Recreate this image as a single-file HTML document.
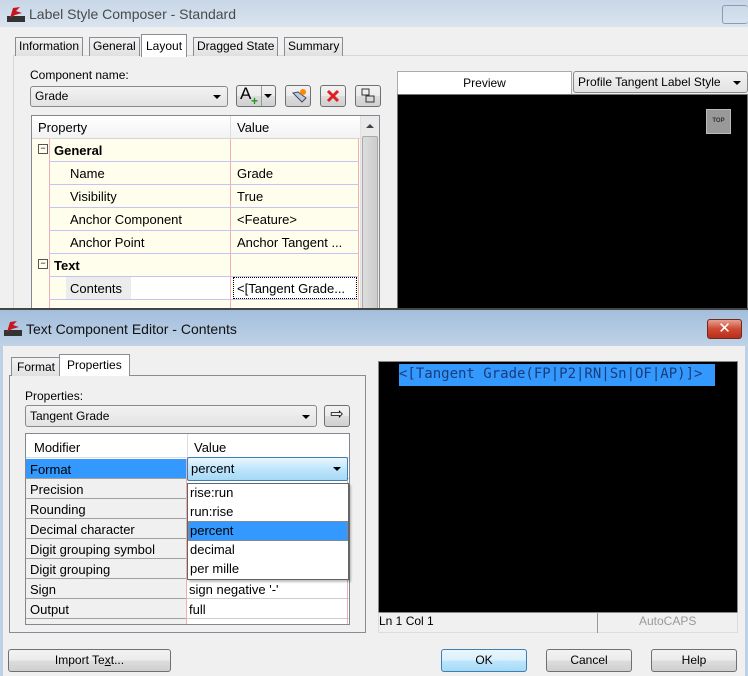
<!DOCTYPE html>
<html><head><style>
*{box-sizing:border-box;margin:0;padding:0}
body{width:748px;height:676px;overflow:hidden;background:#f0f0f0;font-family:"Liberation Sans","DejaVu Sans",sans-serif;font-size:12px;color:#000;position:relative}
.a{position:absolute}
.btn{position:absolute;border:1px solid #707070;border-radius:3px;background:linear-gradient(#f2f2f2,#ebebeb 50%,#dddddd 51%,#cfcfcf);text-align:center;font-size:12px}
.combo{position:absolute;border:1px solid #8a8a8a;border-radius:3px;background:linear-gradient(#f2f2f2,#e3e3e3);padding-left:4px;font-size:12px}
.tri{position:absolute;width:0;height:0;border-left:4px solid transparent;border-right:4px solid transparent;border-top:4px solid #000}
.tab{position:absolute;border:1px solid #898c95;border-bottom:none;background:linear-gradient(#f3f3f3,#e0e0e0);padding:0 3px;font-size:12px}
.row{position:absolute;left:0;right:0;height:23px;border-bottom:1px solid #c4c4f4}
.r2{position:absolute;left:0;right:0;height:20px;border-bottom:1px solid #a0a0a0;background:#f0f0f0}
</style></head><body>

<div class="a" style="left:0;top:0;width:748px;height:27px;background:linear-gradient(#c7d6e7,#d9e4ef)"></div>
<svg class="a" style="left:7px;top:6px" width="18" height="16"><rect x="0" y="10" width="18" height="6" fill="#333"/><path d="M3 12 L6 2 L13 1 L9 5 L15 7 L8 9 Z" fill="#c8141e"/></svg>
<div class="a" style="left:29px;top:6px;font-size:14px;color:#4a4a4a">Label Style Composer - Standard</div>
<div class="a" style="left:722px;top:5px;width:26px;height:19px;border:1px solid #8b9bb0;border-radius:3px;border-right:none"></div>

<div class="a" style="left:13px;top:55px;width:735px;height:256px;border-top:1px solid #d8d8d8;border-left:1px solid #d8d8d8;background:#fff"></div>
<div class="a" style="left:14px;top:56px;width:734px;height:254px;background:#f0f0f0"></div>
<div class="tab" style="left:15px;top:37px;height:19px;line-height:17px">Information</div>
<div class="tab" style="left:89px;top:37px;height:19px;line-height:17px">General</div>
<div class="tab" style="left:141px;top:34px;height:23px;line-height:22px;background:#fff;padding:0 4px">Layout</div>
<div class="tab" style="left:193px;top:37px;height:19px;line-height:17px">Dragged State</div>
<div class="tab" style="left:284px;top:37px;height:19px;line-height:17px">Summary</div>

<div class="a" style="left:30px;top:68px">Component name:</div>
<div class="combo" style="left:30px;top:86px;width:198px;height:21px;line-height:19px">Grade<div class="tri" style="right:6px;top:8px"></div></div>
<div class="btn" style="left:236px;top:85px;width:40px;height:22px"></div>
<div class="a" style="left:240px;top:84px;font-size:17px">A</div><div class="a" style="left:251px;top:94px;color:#1a9a1a;font-weight:bold;font-size:12px">+</div>
<div class="a" style="left:261px;top:86px;width:1px;height:20px;background:#999"></div><div class="tri" style="left:264px;top:94px"></div>
<div class="btn" style="left:285px;top:85px;width:26px;height:22px"><svg width="22" height="20"><path d="M6 7 L15 16 L19 12 L11 6 Z" fill="#bcd" stroke="#446" stroke-width="1"/><circle cx="16" cy="6" r="3" fill="#f80"/></svg></div>
<div class="btn" style="left:320px;top:85px;width:26px;height:22px"><svg width="22" height="20"><path d="M6 5 L16 15 M16 5 L6 15" stroke="#e02020" stroke-width="3"/></svg></div>
<div class="btn" style="left:355px;top:85px;width:26px;height:22px"><svg width="22" height="20"><rect x="5" y="3" width="7" height="6" fill="none" stroke="#333"/><rect x="9" y="10" width="8" height="6" fill="none" stroke="#333"/></svg></div>

<div class="a" style="left:31px;top:115px;width:349px;height:196px;border:1px solid #828790;background:#fffdeb;overflow:hidden">
 <div class="a" style="left:0;top:0;width:328px;height:23px;background:linear-gradient(#fff,#f2f2f2);border-bottom:1px solid #d5d5d5"></div>
 <div class="a" style="left:6px;top:4px;font-size:13px">Property</div>
 <div class="a" style="left:198px;top:0;width:1px;height:23px;background:#ddd"></div>
 <div class="a" style="left:205px;top:4px;font-size:13px">Value</div>
 <div class="a" style="left:17px;top:23px;width:1px;height:180px;background:#f0b0b0"></div>
 <div class="a" style="left:198px;top:23px;width:1px;height:180px;background:#f0b0b0"></div>
 <div class="a" style="left:326px;top:23px;width:1px;height:180px;background:#f0b0b0"></div>
 <div class="a" style="left:17px;top:23px;width:310px;height:160px">
  <div class="row" style="top:0"></div><div class="row" style="top:23px"></div><div class="row" style="top:46px"></div><div class="row" style="top:69px"></div><div class="row" style="top:92px"></div><div class="row" style="top:115px"></div><div class="row" style="top:138px"></div>
 </div>
 <div class="a" style="left:6px;top:28px;width:10px;height:10px;border:1px solid #555;font-size:9px;line-height:7px;text-align:center">−</div>
 <div class="a" style="left:22px;top:27px;font-weight:bold;font-size:13px">General</div>
 <div class="a" style="left:38px;top:50px;font-size:13px">Name</div><div class="a" style="left:205px;top:50px;font-size:13px">Grade</div>
 <div class="a" style="left:38px;top:73px;font-size:13px">Visibility</div><div class="a" style="left:205px;top:73px;font-size:13px">True</div>
 <div class="a" style="left:38px;top:96px;font-size:13px">Anchor Component</div><div class="a" style="left:205px;top:96px;font-size:13px">&lt;Feature&gt;</div>
 <div class="a" style="left:38px;top:119px;font-size:13px">Anchor Point</div><div class="a" style="left:205px;top:119px;font-size:13px">Anchor Tangent ...</div>
 <div class="a" style="left:6px;top:143px;width:10px;height:10px;border:1px solid #555;font-size:9px;line-height:7px;text-align:center">−</div>
 <div class="a" style="left:22px;top:142px;font-weight:bold;font-size:13px">Text</div>
 <div class="a" style="left:34px;top:161px;width:65px;height:22px;background:#ececec"></div>
 <div class="a" style="left:99px;top:161px;width:99px;height:22px;background:#fff"></div>
 <div class="a" style="left:38px;top:165px;font-size:13px">Contents</div>
 <div class="a" style="left:201px;top:161px;width:124px;height:22px;border:1px dotted #000;background:#fff;padding:3px 0 0 3px;font-size:13px">&lt;[Tangent Grade...</div>
 <div class="a" style="left:328px;top:0;width:19px;height:196px;background:#eaeaea;border-left:1px solid #e0e0e0"></div>
 <div class="tri" style="left:334px;top:8px;border-top:none;border-bottom:4px solid #444"></div>
 <div class="a" style="left:330px;top:20px;width:16px;height:180px;background:linear-gradient(90deg,#ddd,#ccc);border:1px solid #aaa;border-radius:2px"></div>
</div>

<div class="a" style="left:397px;top:71px;width:175px;height:23px;border:1px solid #aaa;border-bottom:none;background:#fff;text-align:center;line-height:22px">Preview</div>
<div class="combo" style="left:573px;top:71px;width:175px;height:22px;line-height:20px">Profile Tangent Label Style<div class="tri" style="right:6px;top:9px"></div></div>
<div class="a" style="left:397px;top:94px;width:351px;height:216px;background:#000;border:1px solid #777"></div>
<div class="a" style="left:706px;top:109px;width:25px;height:25px;background:#999;border:1px solid #bbb;font-size:6px;text-align:center;line-height:23px;color:#333;font-weight:bold">TOP</div>

<div class="a" style="left:0;top:308px;width:748px;height:2px;background:#444"></div>
<div class="a" style="left:0;top:310px;width:748px;height:36px;background:linear-gradient(#a3bedc,#bfd2e6)"></div>
<svg class="a" style="left:4px;top:320px" width="18" height="16"><rect x="0" y="10" width="18" height="6" fill="#333"/><path d="M3 12 L6 2 L13 1 L9 5 L15 7 L8 9 Z" fill="#c8141e"/></svg>
<div class="a" style="left:26px;top:321px;font-size:14px;color:#111">Text Component Editor - Contents</div>
<div class="a" style="left:707px;top:319px;width:35px;height:20px;border:1px solid #6b2a22;border-radius:3px;background:linear-gradient(#e8a090,#cf4a33 50%,#b82e1a);color:#fff;font-weight:bold;text-align:center;line-height:18px;font-size:15px">✕</div>
<div class="a" style="left:0;top:346px;width:3px;height:330px;background:#bcd0e6"></div>
<div class="a" style="left:745px;top:346px;width:3px;height:330px;background:#bcd0e6"></div>

<div class="a" style="left:9px;top:375px;width:357px;height:258px;border:1px solid #898c95;background:#f0f0f0"></div>
<div class="tab" style="left:11px;top:357px;height:19px;line-height:18px;padding:0 5px">Format</div>
<div class="tab" style="left:59px;top:354px;height:22px;line-height:20px;background:#fff;padding:0 7px">Properties</div>
<div class="a" style="left:25px;top:389px">Properties:</div>
<div class="combo" style="left:25px;top:405px;width:292px;height:22px;line-height:21px">Tangent Grade<div class="tri" style="right:6px;top:9px"></div></div>
<div class="btn" style="left:324px;top:405px;width:26px;height:22px;font-size:16px;line-height:18px">⇨</div>

<div class="a" style="left:25px;top:433px;width:325px;height:192px;border:1px solid #828790;background:#fff;overflow:hidden">
 <div class="a" style="left:0;top:0;width:323px;height:24px;background:#fff;border-bottom:1px solid #ddd"></div>
 <div class="a" style="left:8px;top:6px;font-size:13px">Modifier</div>
 <div class="a" style="left:161px;top:0;width:1px;height:24px;background:#ddd"></div>
 <div class="a" style="left:168px;top:6px;font-size:13px">Value</div>
 <div class="a" style="left:0;top:25px;width:160px;height:200px">
  <div class="r2" style="top:0;background:#3399ff"></div><div class="r2" style="top:20px"></div><div class="r2" style="top:40px"></div><div class="r2" style="top:60px"></div><div class="r2" style="top:80px"></div><div class="r2" style="top:100px"></div><div class="r2" style="top:120px"></div><div class="r2" style="top:140px"></div><div class="r2" style="top:160px"></div>
 </div>
 <div class="a" style="left:161px;top:25px;width:162px;height:200px;background:#fff">
  <div class="r2" style="top:0;background:#fff;border-color:#ccc"></div><div class="r2" style="top:120px;background:#fff;border-color:#ccc"></div><div class="r2" style="top:140px;background:#fff;border-color:#ccc"></div><div class="r2" style="top:160px;background:#fff;border-color:#ccc"></div>
 </div>
 <div class="a" style="left:160px;top:25px;width:1px;height:170px;background:#f0b0b0"></div>
 <div class="a" style="left:321px;top:25px;width:1px;height:170px;background:#f0b0b0"></div>
 <div class="a" style="left:4px;top:28px;font-size:13px">Format</div>
 <div class="a" style="left:4px;top:48px;font-size:13px">Precision</div>
 <div class="a" style="left:4px;top:68px;font-size:13px">Rounding</div>
 <div class="a" style="left:4px;top:88px;font-size:13px">Decimal character</div>
 <div class="a" style="left:4px;top:108px;font-size:13px">Digit grouping symbol</div>
 <div class="a" style="left:4px;top:128px;font-size:13px">Digit grouping</div>
 <div class="a" style="left:4px;top:148px;font-size:13px">Sign</div><div class="a" style="left:163px;top:148px;font-size:13px">sign negative '-'</div>
 <div class="a" style="left:4px;top:168px;font-size:13px">Output</div><div class="a" style="left:163px;top:168px;font-size:13px">full</div>
 <div class="a" style="left:161px;top:23px;width:161px;height:24px;border:1px solid #3c7fb1;border-radius:2px;background:linear-gradient(#eaf6fd,#bee6fd 50%,#a7d9f5);padding:3px 0 0 3px;font-size:13px">percent<div class="tri" style="right:6px;top:9px"></div></div>
</div>

<div class="a" style="left:187px;top:483px;width:162px;height:97px;border:1px solid #646464;background:#fff;box-shadow:2px 2px 2px rgba(0,0,0,.25);font-size:13px">
 <div class="a" style="left:2px;top:1px">rise:run</div>
 <div class="a" style="left:2px;top:20px">run:rise</div>
 <div class="a" style="left:0;top:37px;width:160px;height:20px;background:#3399ff;border:1px dotted #c08040"></div>
 <div class="a" style="left:2px;top:39px">percent</div>
 <div class="a" style="left:2px;top:58px">decimal</div>
 <div class="a" style="left:2px;top:77px">per mille</div>
</div>

<div class="a" style="left:378px;top:361px;width:360px;height:252px;background:#000;border:1px solid #888"></div>
<div class="a" style="left:399px;top:364px;width:316px;height:22px;background:#3399ff"></div>
<div class="a" style="left:399px;top:366px;width:316px;font-family:'DejaVu Sans Mono','Liberation Mono',monospace;font-size:14px;color:#1a3c7a;letter-spacing:0;white-space:nowrap;overflow:hidden">&lt;[Tangent Grade(FP|P2|RN|Sn|OF|AP)]&gt;</div>
<div class="a" style="left:378px;top:612px;width:360px;height:21px;border:1px solid #ddd;border-top:1px solid #888;background:#f0f0f0"></div>
<div class="a" style="left:597px;top:612px;width:1px;height:21px;background:#999"></div>
<div class="a" style="left:379px;top:614px">Ln 1 Col 1</div>
<div class="a" style="left:639px;top:614px;color:#999">AutoCAPS</div>

<div class="btn" style="left:8px;top:649px;width:163px;height:23px;line-height:21px">Import Te<u>x</u>t...</div>
<div class="btn" style="left:441px;top:649px;width:86px;height:23px;line-height:21px;border-color:#3c7fb1;background:linear-gradient(#eaf6fd,#d9f0fc 50%,#bee6fd 51%,#a7d9f5)">OK</div>
<div class="btn" style="left:546px;top:649px;width:86px;height:23px;line-height:21px">Cancel</div>
<div class="btn" style="left:651px;top:649px;width:86px;height:23px;line-height:21px">Help</div>
</body></html>
